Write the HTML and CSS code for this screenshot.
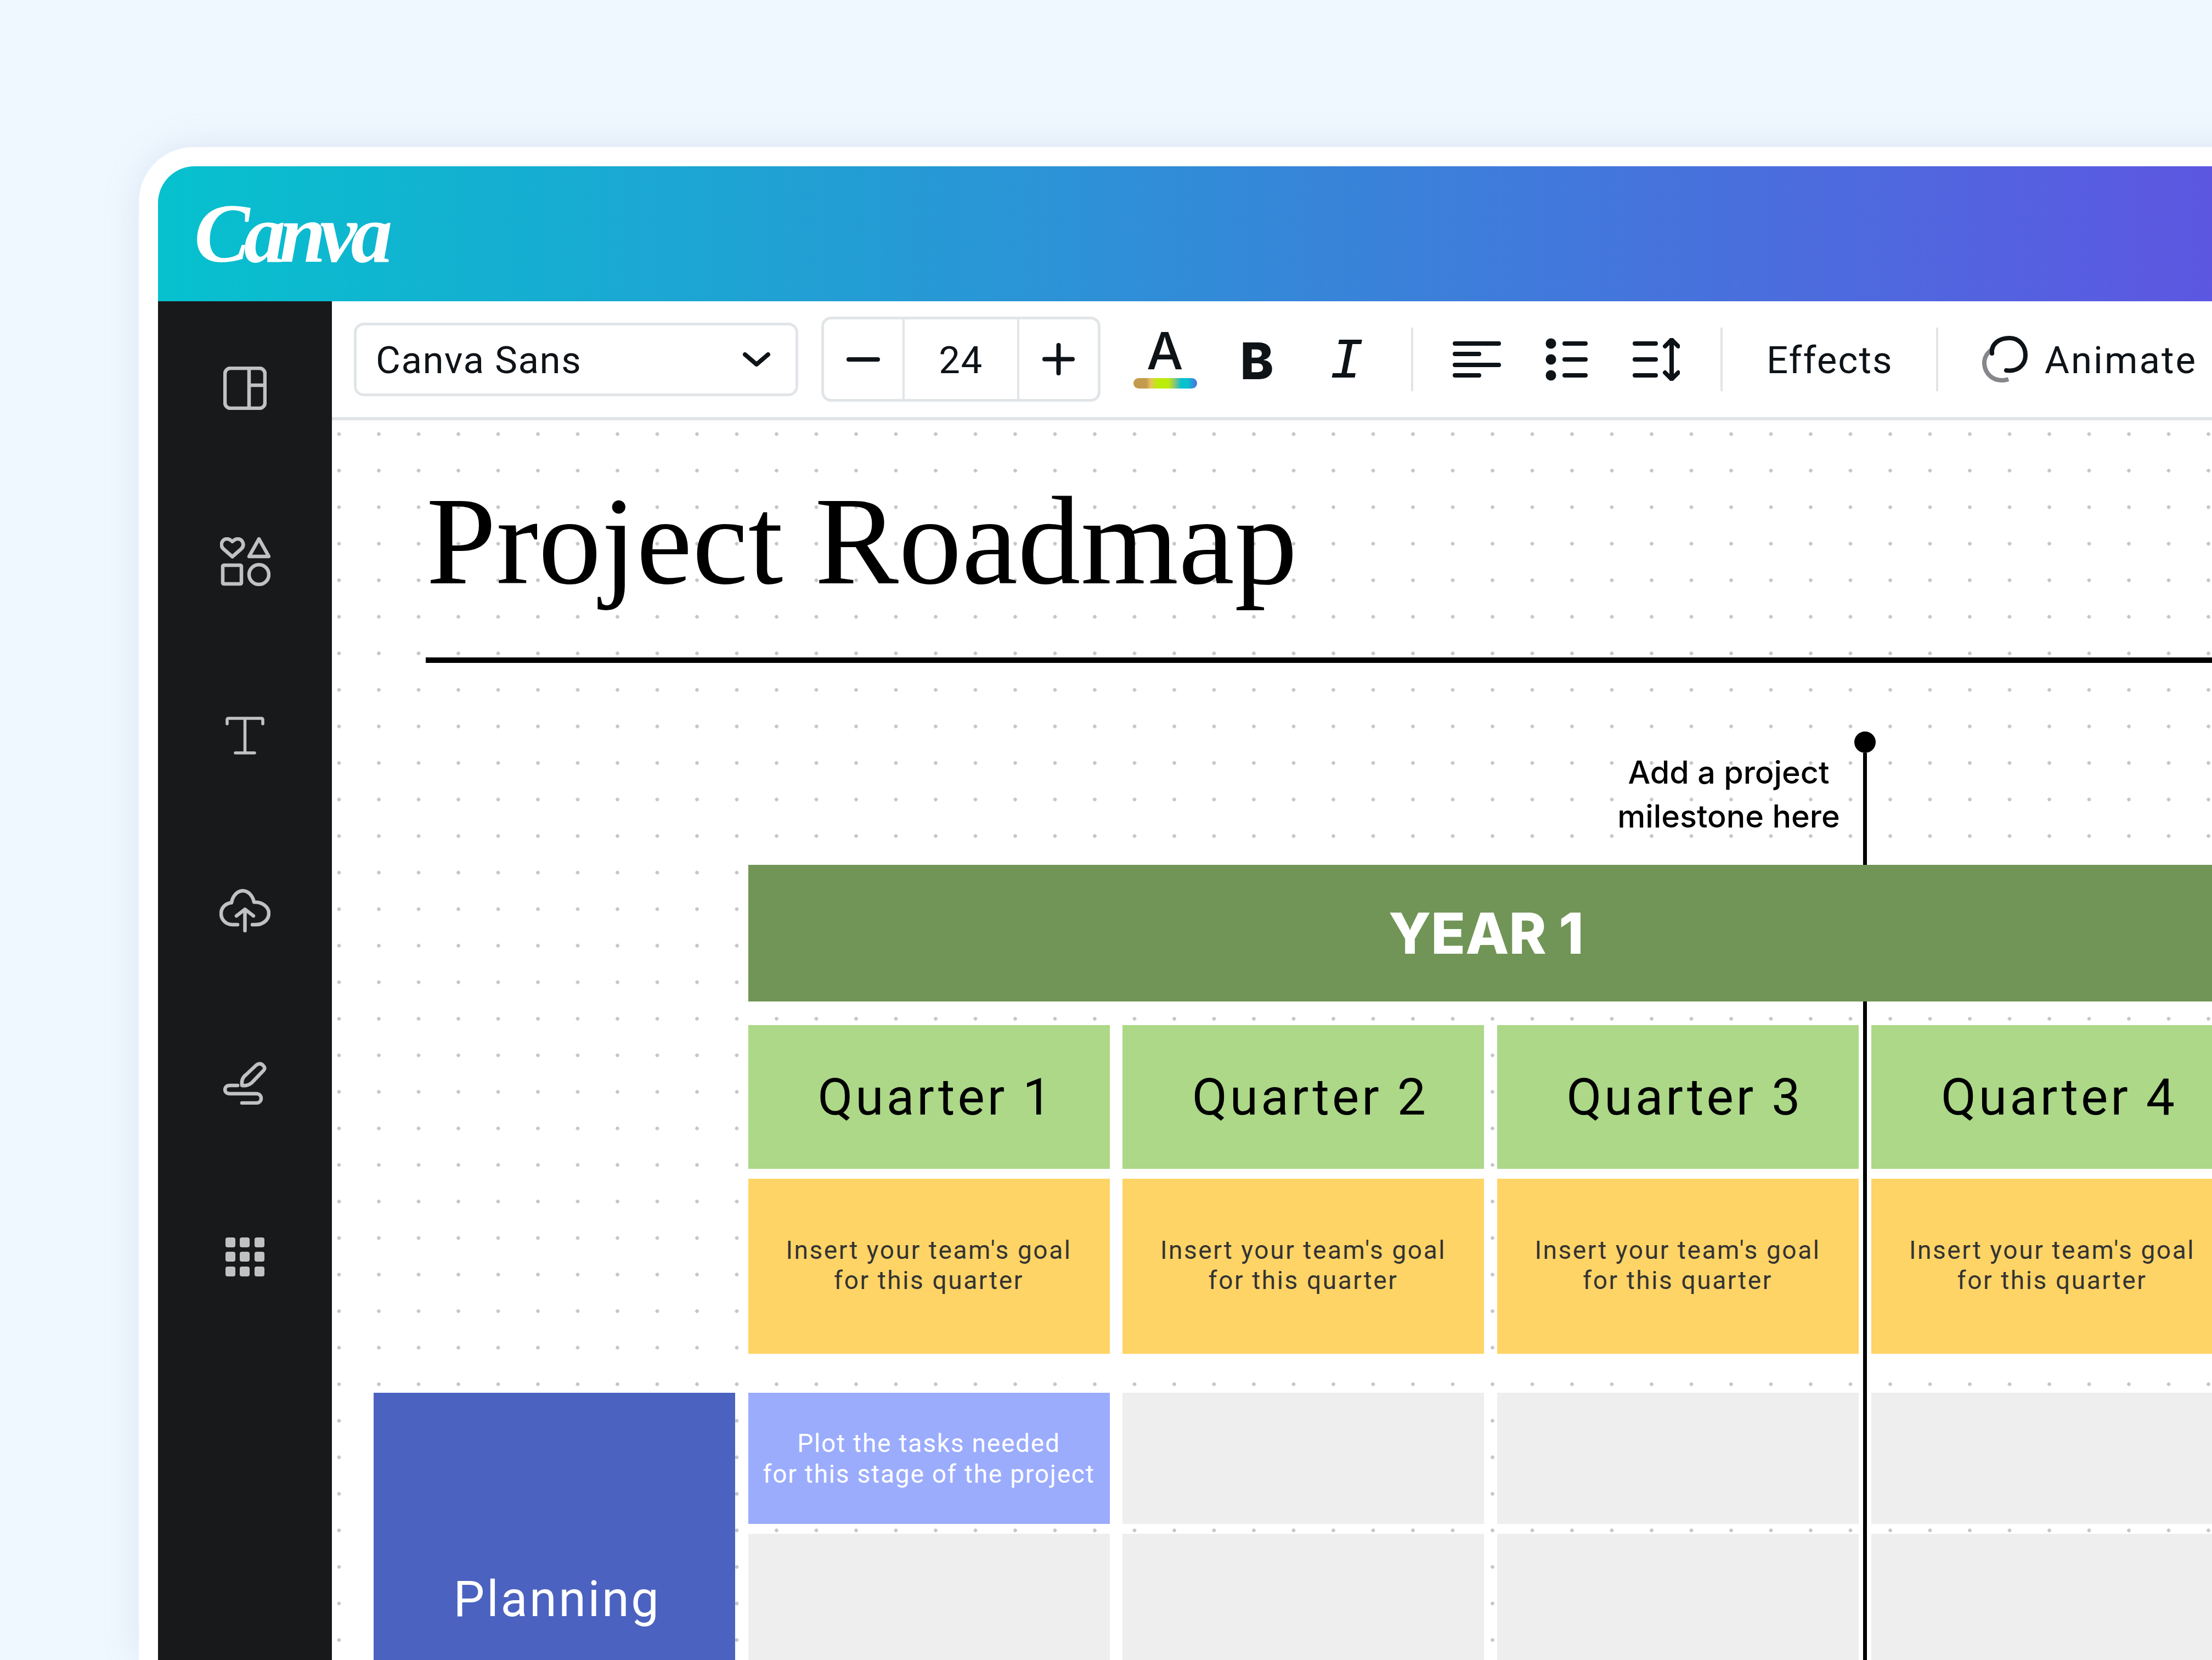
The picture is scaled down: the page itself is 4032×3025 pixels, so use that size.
FILE: index.html
```html
<html><head>
  <title>Project Roadmap</title>
  <link rel="stylesheet" href="styles.css">
</head>
<body>
<div class="window">
  <div class="app">
    <div class="header"><span class="logo">Canva</span></div>

    <div class="main">
      <div class="sidebar">
        <div class="sideItem">
          <svg class="sideIcon" width="79" height="79" viewBox="0 0 79 79"><rect x="3" y="3" width="73" height="73" rx="10"/><path d="M47 3V76M47 34H76"/></svg>
        </div>
        <div class="sideItem">
          <svg class="sideIcon" width="92" height="89" viewBox="0 0 92 89"><path d="M22.500 35.500L6 21C-1 14 4 3 13 3C18 3 20 6 22.500 8C25 6 27 3 32 3C41 3 46 14 39 21Z"/><path d="M71 3L89 35H53Z"/><rect x="5" y="51" width="34" height="34" rx="2"/><circle cx="71" cy="68" r="18"/></svg>
        </div>
        <div class="sideItem">
          <svg class="sideIcon thin" width="71" height="69" viewBox="0 0 71 69"><path d="M3 13V5C3 4 4 3 5 3H66C67 3 68 4 68 5V13M35.500 3V66M18 66H53"/></svg>
        </div>
        <div class="sideItem">
          <svg class="sideIcon" width="93" height="84" viewBox="0 0 93 84"><path d="M33 70H24C11 70 3 60 3 50C3 39 11 31 22 30A21 27 0 0 1 63 29C78 28 90 38 90 49C90 61 80 70 66 70H60"/><path d="M46.500 81V42M31 54L46.500 42L62 54"/></svg>
        </div>
        <div class="sideItem">
          <svg class="sideIcon" width="79" height="79" viewBox="0 0 79 79"><path d="M26 44H12C0 44 0 59 12 59H60C72 59 72 76 60 76H34"/><path d="M34 44C33 35 36 28 42 24L60 7C65 3 70 4 73 8C76 11 76 14 74 16L52 39C46 44 40 45 34 44Z"/></svg>
        </div>
        <div class="sideItem">
          <svg class="sideFill" width="71" height="71" viewBox="0 0 71 71">
            <rect x="0" y="0" width="18" height="18" rx="4"/><rect x="26" y="0" width="18" height="18" rx="4"/><rect x="53" y="0" width="18" height="18" rx="4"/>
            <rect x="0" y="26" width="18" height="18" rx="4"/><rect x="26" y="26" width="18" height="18" rx="4"/><rect x="53" y="26" width="18" height="18" rx="4"/>
            <rect x="0" y="53" width="18" height="18" rx="4"/><rect x="26" y="53" width="18" height="18" rx="4"/><rect x="53" y="53" width="18" height="18" rx="4"/>
          </svg>
        </div>
      </div>

      <div class="workspace">
        <div class="toolbar">
          <div class="fontSelect">
            <span class="selectText">Canva Sans</span>
            <svg class="toolIcon" width="50" height="26" viewBox="0 0 50 26"><path d="M4 4L25 22L46 4"/></svg>
          </div>

          <div class="stepper">
            <div class="stepBtn"><svg class="toolIcon" width="61" height="8" viewBox="0 0 61 8"><path d="M4 4H57"/></svg></div>
            <div class="stepValue">24</div>
            <div class="stepBtn"><svg class="toolIcon" width="59" height="59" viewBox="0 0 59 59"><path d="M4 29.500H55M29.500 4V55"/></svg></div>
          </div>

          <div class="colorTool">
            <span class="colorLetter">A</span>
            <div class="rainbow"></div>
          </div>
          <div class="boldTool">B</div>
          <div class="italicTool">I</div>

          <div class="divider dividerOne"></div>

          <svg class="toolIcon alignIcon" width="88" height="66" viewBox="0 0 88 66"><path d="M4 4H84M4 23H48M4 43H84M4 62H48"/></svg>
          <svg class="toolIcon listIcon" width="78" height="78" viewBox="0 0 78 78"><circle class="dot" cx="10" cy="10" r="9.500"/><circle class="dot" cx="10" cy="39" r="9.500"/><circle class="dot" cx="10" cy="68" r="9.500"/><path d="M35 10H73M35 39H73M35 68H73"/></svg>
          <svg class="toolIcon spacingIcon" width="86" height="78" viewBox="0 0 86 78"><path d="M4 10H42M4 39H42M4 68H42"/><path d="M71 3V75M59 15L71 3L83 15M59 63L71 75L83 63"/></svg>

          <div class="divider dividerTwo"></div>
          <div class="toolText effects">Effects</div>
          <div class="divider dividerThree"></div>

          <svg class="animateIcon" width="86" height="86" viewBox="0 0 86 86">
            <path class="ringBack" d="M17 25C7 33 3 42 4 52C6 70 20 82 38 81C41 81 45 80 48 79"/>
            <path class="ringFront" d="M18 32C16 14 32 4 50 4C67 4 79 18 79 35C79 52 66 66 44 63"/>
          </svg>
          <div class="toolText animateText">Animate</div>
        </div>

        <div class="canvas">
          <h1 class="title">Project Roadmap</h1>
          <div class="titleRule"></div>

          <div class="note">Add a project<br>milestone here</div>

          <!-- linea del traguardo, passa dietro la barra dell'anno -->
          <div class="pin"></div>

          <div class="board">
            <div class="year">YEAR 1</div>

            <div class="quarter firstQuarter">Quarter 1</div>
            <div class="quarter">Quarter 2</div>
            <div class="quarter">Quarter 3</div>
            <div class="quarter">Quarter 4</div>

            <div class="goal firstQuarter">Insert your team's goal<br>for this quarter</div>
            <div class="goal">Insert your team's goal<br>for this quarter</div>
            <div class="goal">Insert your team's goal<br>for this quarter</div>
            <div class="goal">Insert your team's goal<br>for this quarter</div>

            <div class="stage">Planning</div>
            <div class="task">Plot the tasks needed<br>for this stage of the project</div>
            <div class="cell"></div>
            <div class="cell"></div>
            <div class="cell"></div>
            <div class="cell"></div>
            <div class="cell"></div>
            <div class="cell"></div>
            <div class="cell"></div>
            <div class="cell"></div>
            <div class="cell"></div>
            <div class="cell"></div>
            <div class="cell"></div>
          </div>
        </div>
      </div>
    </div>
  </div>
</div>
</body></html>
```

FILE: styles.css
```css
html, body {
  margin: 0;
  height: 100%;
  overflow: hidden;
}

body {
  background-color: #f0f8ff;
  font-family: "Roboto", sans-serif;
  color: #0e1318;
}

.window {
  box-sizing: border-box;
  width: 3879px;
  height: 2757px;
  margin: 268px 0 0 253px;
  padding: 35px 0 0 35px;
  background-color: #fff;
  border-radius: 100px 0 0 0;
  box-shadow: 0 0 70px rgba(90, 120, 160, 0.14);
}

.app {
  height: 100%;
  display: flex;
  flex-direction: column;
  border-radius: 67px 0 0 0;
  overflow: hidden;
}

.header {
  flex: 0 0 246px;
  display: flex;
  align-items: center;
  padding-left: 66px;
  background: linear-gradient(90deg, #06c1ce 0%, #5f54e2 100%);
}

.logo {
  font-family: "Liberation Serif", serif;
  font-style: italic;
  font-weight: bold;
  font-size: 152px;
  letter-spacing: -11px;
  line-height: 1;
  color: #fff;
}

.main {
  flex: 1;
  display: flex;
  min-height: 0;
}

/* barra laterale */
.sidebar {
  flex: 0 0 317px;
  background-color: #18191b;
}

.sideItem {
  height: 316.6px;
  display: flex;
  justify-content: center;
  align-items: center;
}

.sideIcon {
  fill: none;
  stroke: #c0c2c2;
  stroke-width: 6.5;
  stroke-linecap: round;
  stroke-linejoin: round;
}

.sideIcon.thin {
  stroke-width: 5.5;
}

.sideFill {
  fill: #c0c2c2;
}

.workspace {
  flex: 1;
  display: flex;
  flex-direction: column;
  min-width: 0;
}

/* barra degli strumenti */
.toolbar {
  box-sizing: border-box;
  flex: 0 0 217px;
  display: flex;
  align-items: center;
  padding-left: 40px;
  border-bottom: 6px solid #e1e5e8;
  font-size: 69px;
  letter-spacing: 1.5px;
}

.toolIcon {
  flex: none;
  fill: none;
  stroke: #0e1318;
  stroke-width: 8;
  stroke-linecap: round;
  stroke-linejoin: round;
}

.toolIcon .dot {
  fill: #0e1318;
  stroke: none;
}

.fontSelect {
  box-sizing: border-box;
  flex: 0 0 810px;
  height: 134px;
  display: flex;
  justify-content: space-between;
  align-items: center;
  padding: 0 46px 0 35px;
  border: 5px solid #e1e5e8;
  border-radius: 18px;
}

.selectText, .toolText {
  padding-top: 3px;
}

.stepper {
  box-sizing: border-box;
  flex: 0 0 509px;
  height: 155px;
  display: flex;
  margin-left: 42px;
  border: 5px solid #e1e5e8;
  border-radius: 18px;
}

.stepBtn {
  flex: 1;
  display: flex;
  justify-content: center;
  align-items: center;
}

.stepValue {
  flex: 0 0 205px;
  display: flex;
  justify-content: center;
  align-items: center;
  padding-top: 3px;
  border-left: 4px solid #e1e5e8;
  border-right: 4px solid #e1e5e8;
}

.colorTool {
  flex: 0 0 116px;
  height: 102px;
  margin: 4px 0 0 60px;
  display: flex;
  flex-direction: column;
  align-items: center;
  justify-content: space-between;
}

.colorLetter {
  font-family: "Inter", sans-serif;
  font-weight: 500;
  font-size: 94px;
  line-height: 66px;
}

.rainbow {
  width: 116px;
  height: 19px;
  border-radius: 10px;
  background: linear-gradient(90deg, #c49a4e 0%, #c49a4e 20%, #e6c25c 27%, #bcec0a 38%, #bcec0a 55%, #8cc27a 65%, #06c1ce 75%, #06c1ce 85%, #4f6ee2 100%);
}

.boldTool {
  flex: 0 0 54px;
  min-width: 0;
  display: flex;
  justify-content: center;
  margin-left: 82px;
  padding-top: 6px;
  font-family: "Inter", sans-serif;
  font-weight: 800;
  font-size: 92px;
  line-height: 95px;
  letter-spacing: 0;
}

.italicTool {
  flex: 0 0 58px;
  min-width: 0;
  display: flex;
  justify-content: center;
  margin-left: 107px;
  padding-top: 10px;
  font-family: "Liberation Mono", monospace;
  font-style: italic;
  font-size: 104px;
  line-height: 108px;
  letter-spacing: 0;
}

.divider {
  flex: 0 0 4px;
  height: 116px;
  background-color: #e1e5e8;
}

.dividerOne { margin-left: 89px; }
.alignIcon { margin-left: 72px; }
.listIcon { margin-left: 81px; }
.spacingIcon { margin-left: 81px; }
.dividerTwo { margin-left: 74px; }
.effects { flex: 0 0 224px; min-width: 0; margin-left: 80px; letter-spacing: 2px; }
.dividerThree { margin-left: 85px; }
.animateIcon { flex: none; margin-left: 80px; }
.animateText { margin-left: 28px; letter-spacing: 3px; }

.toolText {
  white-space: nowrap;
}

.animateIcon path {
  fill: none;
  stroke-width: 8;
}

.ringBack { stroke: #85878a; }
.ringFront { stroke: #0e1318; stroke-linecap: round; }

/* area di lavoro con i puntini */
.canvas {
  flex: 1;
  position: relative;
  overflow: hidden;
  background-color: #fff;
  background-image: radial-gradient(circle at center, #c4c7c9 3px, transparent 3.6px);
  background-size: 72.5px 66.6px;
  background-position: -23.25px -8.3px;
}

.title {
  margin: 95px 0 0 172px;
  font-family: "Liberation Serif", serif;
  font-weight: normal;
  font-size: 229px;
  line-height: 250px;
  letter-spacing: 0.3px;
  color: #000;
  white-space: nowrap;
}

.titleRule {
  height: 10px;
  margin: 87px 0 0 171px;
  background-color: #000;
}

.note {
  width: 500px;
  margin: 159px 0 0 2296px;
  font-family: "Inter", sans-serif;
  font-weight: 500;
  font-size: 57.5px;
  line-height: 80px;
  text-align: center;
  color: #000;
}

.pin {
  position: absolute;
  left: 2791px;
  top: 606px;
  bottom: 0;
  width: 7px;
  background-color: #000;
}

.pin::before {
  content: '';
  position: absolute;
  left: -16px;
  top: -39px;
  width: 39px;
  height: 39px;
  border-radius: 50%;
  background-color: #000;
}

.board {
  display: grid;
  grid-template-columns: repeat(5, 659px);
  column-gap: 23.5px;
  row-gap: 17.5px;
  margin: 48.5px 0 0 76px;
  width: 3390px;
}

.year {
  grid-column: 2 / 6;
  position: relative;
  height: 249px;
  margin-bottom: 26px;
  padding-right: 16px;
  display: flex;
  justify-content: center;
  align-items: center;
  background-color: #719556;
  color: #fff;
  font-family: "Inter", sans-serif;
  font-weight: 800;
  font-size: 103px;
}

.firstQuarter {
  grid-column: 2;
}

.quarter, .goal, .stage, .task {
  display: flex;
  justify-content: center;
  align-items: center;
  text-align: center;
}

.quarter {
  box-sizing: border-box;
  height: 262px;
  padding-left: 26px;
  background-color: #acd888;
  color: #000;
  font-size: 93px;
  letter-spacing: 5px;
}

.goal {
  box-sizing: border-box;
  height: 319px;
  margin-bottom: 54px;
  padding-bottom: 3px;
  background-color: #ffd466;
  color: #333;
  font-size: 46px;
  line-height: 55px;
  letter-spacing: 2.600px;
}

.stage {
  grid-row: span 3;
  padding-left: 10px;
  background-color: #4b62c0;
  color: #fff;
  font-size: 90px;
  letter-spacing: 3.600px;
}

.task {
  height: 239px;
  background-color: #9bacfd;
  color: #fff;
  font-size: 46px;
  line-height: 56px;
  letter-spacing: 1.800px;
}

.cell {
  height: 239px;
  background-color: #eee;
}
```
